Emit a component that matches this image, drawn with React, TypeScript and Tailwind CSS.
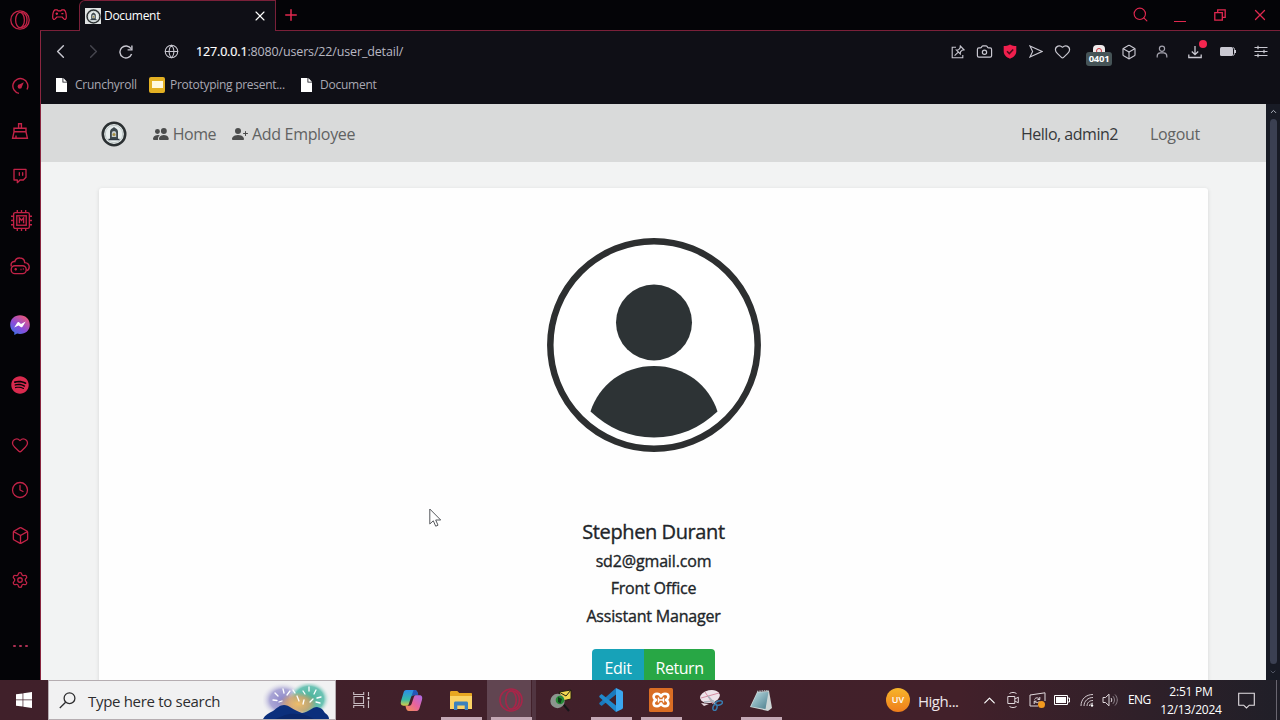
import React from "react"
import {
  Box,
  Camera,
  ChevronLeft,
  ChevronRight,
  ChevronUp,
  Clock,
  Globe,
  Heart,
  Plus,
  Search,
  Settings,
  X,
} from "lucide-react"
import { BsPeopleFill, BsPersonPlusFill } from "react-icons/bs"
import { FaSpotify } from "react-icons/fa"
import { FiTwitch } from "react-icons/fi"

type SvgProps = { className?: string }

function OperaIcon({ className }: SvgProps) {
  return (
    <svg viewBox="0 0 20 20" fill="none" stroke="currentColor" strokeWidth="1.3" className={className}>
      <circle cx="10" cy="10" r="9.2" />
      <ellipse cx="10" cy="10" rx="4.4" ry="7.6" />
      <path d="M11 2.400c4.600.4 6 4 6 7.600s-1.400 7.200-6 7.600" />
    </svg>
  )
}

function GamepadIcon({ className }: SvgProps) {
  return (
    <svg viewBox="0 0 15 12" fill="none" stroke="currentColor" strokeWidth="1.2" className={className}>
      <path d="M3 .8h2.200l1 1h2.600l1-1H12c1.500 1 2.300 4 2.300 7.200 0 2.400-1.400 3-2.500 1.900L10.200 8H4.800L3.200 9.900C2.100 11 .7 10.400.7 8 .7 4.800 1.500 1.800 3 .8Z" />
      <path d="M3.600 4.700h2.400M4.800 3.500v2.400M9.400 4.700h2" />
    </svg>
  )
}

function SpeedIcon({ className }: SvgProps) {
  return (
    <svg viewBox="0 0 18 18" fill="none" stroke="currentColor" strokeWidth="1.4" className={className}>
      <path d="M8 16.400A7.500 7.500 0 1 1 16 12.500" />
      <path d="M12.800 5.200 8.800 7.300a2.200 2.200 0 1 0 2.200 2.200Z" fill="currentColor" stroke="none" />
    </svg>
  )
}

function CleanerIcon({ className }: SvgProps) {
  return (
    <svg viewBox="0 0 18 18" fill="none" stroke="currentColor" strokeWidth="1.400" className={className}>
      <path d="M7.600 6V1.800h2.800V6M3 6.200h12v3.600H3zM3 9.800l-1.400 6.400h14.800L15 9.800M5 16v-2.500" />
    </svg>
  )
}

function ChipIcon({ className }: SvgProps) {
  return (
    <svg viewBox="0 0 20 20" fill="none" stroke="currentColor" strokeWidth="1.300" className={className}>
      <rect x="2.500" y="2.500" width="15" height="15" rx="1.500" />
      <rect x="5.500" y="5.500" width="9" height="9" />
      <path d="M8 12.500v-5l2 2.500 2-2.500v5" />
      <path d="M6 0v2.500M10 0v2.500M14 0v2.500M6 17.500V20M10 17.500V20M14 17.500V20M0 6h2.500M0 10h2.500M0 14h2.500M17.500 6H20M17.500 10H20M17.500 14H20" />
    </svg>
  )
}

function CloudGameIcon({ className }: SvgProps) {
  return (
    <svg viewBox="0 0 20 18" fill="none" stroke="currentColor" strokeWidth="1.400" className={className}>
      <path d="M1.500 9.500C0 6 3 4.200 4.800 4.600 5.600 1.800 8 .8 10 1c3 .2 4.600 2.400 4.700 4.600 3 .1 4.600 2 4.500 4.400 0 2-1.200 3.200-2.500 3.700" />
      <rect x="1.200" y="8.800" width="15" height="7.800" rx="3.600" />
      <path d="M4.500 12.200h2.400M5.700 11v2.400M10.500 12.500h1M12.800 12h1" />
    </svg>
  )
}

function MessengerIcon({ className }: SvgProps) {
  return (
    <svg viewBox="0 0 20 20" className={className}>
      <defs>
        <linearGradient id="msg" x1="0" y1="1" x2="0.700" y2="0">
          <stop offset="0" stopColor="#2a7be8" />
          <stop offset="0.500" stopColor="#8a4ddb" />
          <stop offset="1" stopColor="#e8577c" />
        </linearGradient>
      </defs>
      <path d="M10 .3c5.700 0 9.800 4 9.800 9.400s-4.100 9.300-9.800 9.300c-1 0-2-.1-2.900-.4L4.300 20v-2.700C1.700 15.600.2 13 .2 9.700.2 4.300 4.300.3 10 .3Z" fill="url(#msg)" />
      <path d="m4.200 12.400 3-4.700c.4-.6 1.200-.8 1.800-.4l2 1.600 4.700-2.400-3.200 5.200c-.4.600-1.200.8-1.800.4L8.600 10.400Z" fill="#fff" />
    </svg>
  )
}

function PinShareIcon({ className }: SvgProps) {
  return (
    <svg viewBox="0 0 14 14" fill="none" stroke="currentColor" strokeWidth="1.100" className={className}>
      <path d="M5 2.200H1.200v10.600h10.600V10" />
      <path d="m9.300 1 3.800 3.800-2 .4-1.600 1.600-.2 2.200-4-4 2.200-.2 1.500-1.600ZM7 7.300 3.600 10.700" />
    </svg>
  )
}

function ShieldIcon({ className }: SvgProps) {
  return (
    <svg viewBox="0 0 14 15" className={className}>
      <path d="M7 .5c2 1.100 4 1.600 6.300 1.600v5.200c0 3.700-2.600 6-6.300 7.400C3.300 13.300.7 11 .7 7.300V2.100C3 2.100 5 1.600 7 .5Z" fill="#f01f4d" />
      <path d="m4 7.200 2.300 2.400L10.200 5.400" fill="none" stroke="#4d0a1c" strokeWidth="1.500" />
    </svg>
  )
}

function SendIcon({ className }: SvgProps) {
  return (
    <svg viewBox="0 0 14 13" fill="none" stroke="currentColor" strokeWidth="1.100" className={className}>
      <path d="m1 1 12 5.500L1 12l2.600-5.500Z" />
    </svg>
  )
}

function PersonIcon({ className }: SvgProps) {
  return (
    <svg viewBox="0 0 12 13" fill="none" stroke="currentColor" strokeWidth="1.200" className={className}>
      <circle cx="6" cy="3.700" r="2.600" />
      <path d="M1.200 12.500V11c0-1.800 1-3 3-3.200h3.600c2 .2 3 1.400 3 3.200v1.500" />
    </svg>
  )
}

function DownloadIcon({ className }: SvgProps) {
  return (
    <svg viewBox="0 0 14 14" fill="none" stroke="currentColor" strokeWidth="1.300" className={className}>
      <path d="M7 1v8.500M3.800 6.500 7 9.700l3.200-3.200M.8 9.500v3h12.400v-3" />
    </svg>
  )
}

function BatteryIcon({ className }: SvgProps) {
  return (
    <svg viewBox="0 0 16 9" fill="currentColor" className={className}>
      <rect width="13" height="9" rx="1.500" />
      <path d="M13 .8c1.200 0 1.500.6 1.500 1.700v4c0 1.100-.3 1.700-1.500 1.700" fill="none" stroke="currentColor" />
      <path d="M15.500 3v3" stroke="currentColor" />
    </svg>
  )
}

function SlidersIcon({ className }: SvgProps) {
  return (
    <svg viewBox="0 0 14 13" fill="none" stroke="currentColor" strokeWidth="1.200" className={className}>
      <path d="M.5 2.500h13M.5 6.500h13M.5 10.500h13M4 .8v3.400M10 4.800v3.400M4 8.800v3.400" />
    </svg>
  )
}

function ReloadIcon({ className }: SvgProps) {
  return (
    <svg viewBox="0 0 14 14" fill="none" stroke="currentColor" strokeWidth="1.400" className={className}>
      <path d="M12.600 9A6 6 0 1 1 12 3.700" />
      <path d="M12.900.6v4.300H8.600" />
    </svg>
  )
}

function RestoreIcon({ className }: SvgProps) {
  return (
    <svg viewBox="0 0 12 12" fill="none" stroke="currentColor" strokeWidth="1.300" className={className}>
      <path d="M.8 3.700h7.500v7.500H.8zM3.700 3.500V.8h7.500v7.500H8.500" />
    </svg>
  )
}

function PageIcon({ className }: SvgProps) {
  return (
    <svg viewBox="0 0 11 14" className={className}>
      <path d="M0 0h6.500v4.500H11V14H0Z" fill="#fff" />
      <path d="M7.300 0 11 3.700H7.300Z" fill="#fff" />
    </svg>
  )
}

function SchoolSeal({ className }: SvgProps) {
  return (
    <svg viewBox="0 0 26 26" className={className}>
      <circle cx="13" cy="13" r="11.200" fill="#e8eeee" stroke="#2b3032" strokeWidth="2.600" />
      <circle cx="13" cy="13" r="8.700" fill="none" stroke="#aab4b4" strokeWidth=".7" />
      <path d="M9 19v-8.500C9 8 13 6.200 13 6.200S17 8 17 10.500V19Z" fill="#3e494e" />
      <path d="M10.800 16v-4c0-2.800 4.400-2.800 4.400 0v4Z" fill="#c7ced0" />
      <circle cx="13" cy="13.500" r="1.500" fill="#a58f42" />
      <path d="M7.500 18.500h11" stroke="#303a44" strokeWidth="1.500" />
    </svg>
  )
}

function Avatar() {
  return (
    <svg viewBox="0 0 214 214" className="h-[214px] w-[214px]">
      <circle cx="107" cy="107" r="103.700" fill="#fff" stroke="#2d2f30" strokeWidth="6.500" />
      <circle cx="107" cy="84.500" r="38" fill="#2d3335" />
      <path d="M43.500 173.500C52 147 76 128 107 128s55 19 63.500 45.500C153 190 132 199.500 107 199.500S61 190 43.500 173.500Z" fill="#2d3335" />
    </svg>
  )
}

function WindowsIcon() {
  return (
    <svg viewBox="0 0 16 16" fill="#fff" className="h-4 w-4">
      <path d="M0 2.300 6.600 1.400v6.200H0ZM7.300 1.300 16 0v7.600H7.300ZM0 8.300h6.600v6.300L0 13.700ZM7.300 8.300H16V16l-8.700-1.300Z" />
    </svg>
  )
}

function FireworksArt() {
  return (
    <svg viewBox="0 0 68 36" className="h-9 w-[68px]">
      <defs>
        <radialGradient id="fwl">
          <stop offset="0" stopColor="#8d86c8" />
          <stop offset="0.600" stopColor="#aaa6d5" />
          <stop offset="1" stopColor="#f1f1f2" stopOpacity="0" />
        </radialGradient>
        <radialGradient id="fwr">
          <stop offset="0" stopColor="#45b096" />
          <stop offset="0.700" stopColor="#6cc3b4" />
          <stop offset="1" stopColor="#f1f1f2" stopOpacity="0" />
        </radialGradient>
        <radialGradient id="fwc">
          <stop offset="0" stopColor="#f0bd6a" />
          <stop offset="0.600" stopColor="#d8a56b" stopOpacity=".8" />
          <stop offset="1" stopColor="#d8a56b" stopOpacity="0" />
        </radialGradient>
      </defs>
      <ellipse cx="20" cy="17" rx="22" ry="18" fill="url(#fwl)" />
      <ellipse cx="46" cy="16" rx="21" ry="18" fill="url(#fwr)" />
      <ellipse cx="35" cy="21" rx="19" ry="12" fill="url(#fwc)" />
      <path d="m20 6 1 4M27 8l-3 4M12 10l3 3M10 17l4 .5M30 7l2 3M46 4v4M53 7l-2 4M40 8l2 3M58 14l-4 1M34 13l2 5M41 17l-1 4M50 16l-3 3M16 19l3-1M57 20l-4-1" stroke="#fff" strokeWidth="1.300" strokeLinecap="round" />
      <path d="M0 36c2-4 6-6 10-8 4-3 7-6 11-6 5 0 9 5 18 8 7-1 10-6 15-6 5 1 6 3 8 6 3 2 4 4 4 6Z" fill="#0b2f7c" />
      <path d="M12 36c9-3 12-6 21-5 9 0 12 2 18 5Z" fill="#09276c" />
    </svg>
  )
}

function TaskViewIcon() {
  return (
    <svg viewBox="0 0 17 16" fill="none" stroke="#c9bcc2" strokeWidth="1.100" className="h-4 w-[17px]">
      <path d="M.7 0v2.500h10V0M.7 16v-2.500h10V16M1 4.500h9.500v7H1zM15.500 0v4M15.500 8.500V16" />
      <path d="M14.500 6.200h2" strokeWidth="2" stroke="#fff" />
    </svg>
  )
}

function CopilotIcon() {
  return (
    <svg viewBox="0 0 22 22" className="h-[23px] w-[23px]">
      <defs>
        <linearGradient id="cpa" x1="0" y1="0" x2="0" y2="1">
          <stop offset="0" stopColor="#2c8ce8" />
          <stop offset="0.600" stopColor="#35b9a8" />
          <stop offset="1" stopColor="#d8cf45" />
        </linearGradient>
        <linearGradient id="cpb" x1="1" y1="0" x2="0" y2="1">
          <stop offset="0" stopColor="#a96bea" />
          <stop offset="0.500" stopColor="#e8639c" />
          <stop offset="1" stopColor="#f39550" />
        </linearGradient>
      </defs>
      <path d="M6 1h8c1.600 0 2.300 1 2.800 2.500L17.500 6H13c-1.500 0-2.300 1-2.700 2.500L8.500 14c-.5 1.500-1.300 2-2.600 2H3.500C1 16 .3 14 1 11.500L3.200 4C3.700 2 4.500 1 6 1Z" fill="url(#cpa)" />
      <path d="M13 1h1c1.600 0 2.300 1 2.800 2.500l.7 2.500H13c-1 0-1.700.5-2.200 1.500Z" fill="#2457b8" />
      <path d="M16 21H8.500C7 21 6.200 20 5.800 18.500L5.200 16h3.600c1.500 0 2.200-1 2.600-2.500L13.200 8c.5-1.500 1.300-2 2.600-2h2.700c2.500 0 3.200 2 2.500 4.500L18.800 18c-.5 2-1.300 3-2.800 3Z" fill="url(#cpb)" />
    </svg>
  )
}

function FolderIcon() {
  return (
    <svg viewBox="0 0 22 19" className="h-[19px] w-[22px]">
      <path d="M0 1.500C0 .7.500 0 1.300 0h6l2 2H21c.6 0 1 .4 1 1v15H0Z" fill="#e8a722" />
      <path d="M0 5h22v13H0Z" fill="#fbd365" />
      <path d="M4 19v-7c0-1 .6-1.600 1.500-1.600h11c.9 0 1.500.6 1.500 1.600v7h-3.300v-4.500H7.300V19Z" fill="#3c82bd" />
    </svg>
  )
}

function InspectorIcon() {
  return (
    <svg viewBox="0 0 22 23" className="h-[23px] w-[22px]">
      <path d="m9 3 12-2v9l-9 2Z" fill="#f2d750" stroke="#242010" />
      <path d="m9 3 7 4 5-6" fill="none" stroke="#242010" />
      <path d="m13 15 6 7" stroke="#17161a" strokeWidth="2" />
      <circle cx="7.500" cy="12" r="7.200" fill="#8c968f" />
      <circle cx="10" cy="11" r="4.300" fill="#268b35" />
      <path d="m8 8 4 2-1.500 4.500L8 13Z" fill="#0d3d18" />
    </svg>
  )
}

function CodeIcon() {
  return (
    <svg viewBox="0 0 24 24" className="h-6 w-6">
      <path d="M17 0v6.500L3.200 17.600c-.4.300-.9.300-1.200 0L.5 16.200c-.4-.4-.4-1 0-1.400Z" fill="#1a79bd" />
      <path d="M17 24v-6.500L3.200 6.400c-.4-.3-.9-.3-1.200 0L.5 7.800c-.4.4-.4 1 0 1.400Z" fill="#2089cc" />
      <path d="M17 0v24l5.800-2.700c.7-.3 1.200-1 1.200-1.800v-15c0-.8-.5-1.500-1.200-1.800Z" fill="#3ba7ee" />
    </svg>
  )
}

function XamppIcon() {
  return (
    <svg viewBox="0 0 24 24" className="h-6 w-6">
      <rect width="24" height="24" rx="1.500" fill="#d96d24" />
      <path
        d="M8 5.800C5.600 5.800 4.600 7.300 4.600 8.700c0 1.700 1.200 2.700 2.300 3.300-1.100.6-2.300 1.600-2.300 3.300 0 1.400 1 2.900 3.400 2.900 2.100 0 3.200-1 4-2.700.8 1.700 1.900 2.700 4 2.700 2.400 0 3.400-1.500 3.400-2.900 0-1.700-1.200-2.700-2.300-3.300 1.100-.6 2.300-1.600 2.300-3.300 0-1.400-1-2.900-3.400-2.900-2.100 0-3.200 1-4 2.700-.8-1.700-1.900-2.700-4-2.700Z"
        fill="none"
        stroke="#fff"
        strokeWidth="2.600"
        strokeLinejoin="round"
      />
      <path d="M9.500 9.500v5M14.500 9.500v5M9.500 12h5" stroke="#fff" strokeWidth="1.500" />
    </svg>
  )
}

function SnipIcon() {
  return (
    <svg viewBox="0 0 23 22" className="h-[22px] w-[23px]">
      <ellipse cx="10" cy="7.500" rx="10" ry="6.300" transform="rotate(-12 10 7.500)" fill="#eee3ea" />
      <path d="m1 9 18-5M5 3l8 12" stroke="#d58ba0" />
      <path d="m8 7 7 8M4 13l10-1" stroke="#abb4bd" strokeWidth="1.500" />
      <ellipse cx="19" cy="14" rx="3.500" ry="2" transform="rotate(-15 19 14)" fill="none" stroke="#397caf" strokeWidth="1.500" />
      <ellipse cx="15" cy="18.500" rx="2" ry="3" transform="rotate(15 15 18.500)" fill="none" stroke="#397caf" strokeWidth="1.500" />
      <path d="m1 14 8 1-5 2Z" fill="#e9dce2" />
    </svg>
  )
}

function NotepadIcon() {
  return (
    <svg viewBox="0 0 22 21" className="h-[21px] w-[22px]">
      <defs>
        <linearGradient id="note" x1="0" y1="0" x2="1" y2="1">
          <stop offset="0" stopColor="#c1dfe3" />
          <stop offset="0.550" stopColor="#7faab5" />
          <stop offset="1" stopColor="#4d7e8c" />
        </linearGradient>
      </defs>
      <path d="m7 2 12-1 3 17-4 3L0 17Z" fill="#ced6d6" />
      <path d="m7.500 2.500 11-.5-3 17L1 16.500Z" fill="url(#note)" />
      <path d="m7 1.500 12-1" stroke="#aab4b8" strokeWidth="1.500" strokeDasharray="1.500 .8" />
    </svg>
  )
}

const taskbarApps = [
  { name: "task-view", icon: <TaskViewIcon />, open: false },
  { name: "copilot", icon: <CopilotIcon />, open: false },
  { name: "explorer", icon: <FolderIcon />, open: true },
  { name: "opera", icon: <OperaIcon className="h-6 w-6 text-[#a82549]" />, open: true, active: true },
  { name: "inspector", icon: <InspectorIcon />, open: false },
  { name: "code", icon: <CodeIcon />, open: true },
  { name: "xampp", icon: <XamppIcon />, open: true },
  { name: "snip", icon: <SnipIcon />, open: false },
  { name: "notepad", icon: <NotepadIcon />, open: true },
]

function SidebarItem({ children, tall }: { children: React.ReactNode; tall?: boolean }) {
  return <div className={tall ? "flex h-[60px] items-center justify-center" : "flex h-[45px] items-center justify-center"}>{children}</div>
}

function Sidebar() {
  return (
    <aside className="flex w-10 shrink-0 flex-col bg-[#040407] text-[#c22347]">
      <div className="flex h-10 items-center justify-center">
        <OperaIcon className="h-5 w-5" />
      </div>
      <div className="mt-[23px]">
        <SidebarItem><SpeedIcon className="h-[18px] w-[18px]" /></SidebarItem>
        <SidebarItem><CleanerIcon className="h-[18px] w-[18px]" /></SidebarItem>
        <SidebarItem><FiTwitch className="h-4 w-4" /></SidebarItem>
        <SidebarItem><ChipIcon className="ml-[3px] h-[21px] w-[21px]" /></SidebarItem>
        <SidebarItem><CloudGameIcon className="h-[18px] w-5" /></SidebarItem>
      </div>
      <div className="mt-[7px]">
        <SidebarItem tall><MessengerIcon className="h-5 w-5" /></SidebarItem>
        <SidebarItem tall><FaSpotify className="h-[18px] w-[18px] text-[#d92a4e]" /></SidebarItem>
      </div>
      <div className="mt-[7px]">
        <SidebarItem><Heart size={18} strokeWidth={1.7} /></SidebarItem>
        <SidebarItem><Clock size={18} strokeWidth={1.7} /></SidebarItem>
        <SidebarItem><Box size={19} strokeWidth={1.7} className="mt-px" /></SidebarItem>
        <SidebarItem><Settings size={18} strokeWidth={1.7} /></SidebarItem>
      </div>
      <div className="mt-[43px] flex justify-center gap-[3px]">
        <span className="h-[2px] w-[3px] rounded-full bg-[#b03055]" />
        <span className="h-[2px] w-[3px] rounded-full bg-[#b03055]" />
        <span className="h-[2px] w-[3px] rounded-full bg-[#b03055]" />
      </div>
    </aside>
  )
}

function TabBar() {
  return (
    <div className="flex h-[31px] bg-[#040407] text-[#e0284f]">
      <div className="flex w-[39px] items-center justify-center border-b border-[#7a2039]">
        <GamepadIcon className="h-3 w-[15px]" />
      </div>
      <div className="flex w-[197px] items-center rounded-tl-[6px] border-l border-r border-t border-[#7a2039] bg-[#0f0f16] pl-[5px] pr-[7px] text-white">
        <div className="flex h-4 w-4 items-center justify-center bg-[#dfe2e2]">
          <SchoolSeal className="h-[15px] w-[15px]" />
        </div>
        <span className="ml-[3px] flex-1 text-[12px] tracking-[-0.300px]">Document</span>
        <X size={16} strokeWidth={1.700} />
      </div>
      <div className="flex flex-1 items-center border-b border-[#7a2039]">
        <Plus size={18} strokeWidth={2} className="ml-[6px]" />
        <div className="ml-auto flex">
          <div className="flex w-10 justify-center"><Search size={17} strokeWidth={1.600} /></div>
          <div className="flex w-10 items-end justify-center"><span className="mb-[2px] h-[1.500px] w-3 bg-[#e0284f]" /></div>
          <div className="flex w-10 items-center justify-center"><RestoreIcon className="h-3 w-3" /></div>
          <div className="flex w-10 items-center justify-center"><X size={18} strokeWidth={1.700} /></div>
        </div>
      </div>
    </div>
  )
}

function AddressBar() {
  return (
    <div className="flex h-[41px] items-center pr-[4px] text-[#c9c8d1]">
      <div className="flex w-[38px] justify-center"><ChevronLeft size={23} strokeWidth={1.500} /></div>
      <div className="flex w-[28px] justify-center text-[#45454e]"><ChevronRight size={23} strokeWidth={1.500} /></div>
      <div className="flex w-[38px] justify-center"><ReloadIcon className="h-[14px] w-[14px]" /></div>
      <div className="ml-[12px] flex w-[28px] justify-center"><Globe size={15} strokeWidth={1.700} /></div>
      <div className="ml-[11px] whitespace-nowrap pt-px text-[12.500px] tracking-[-0.150px]">
        <span className="text-white [-webkit-text-stroke:0.2px]">127.0.0.1</span>
        <span className="text-[#b9b8c3]">:8080/users/22/user_detail/</span>
      </div>
      <div className="ml-auto flex items-center">
        <div className="flex w-[26px] justify-center"><PinShareIcon className="h-[14px] w-[14px]" /></div>
        <div className="flex w-[26px] justify-center"><Camera size={17} strokeWidth={1.700} /></div>
        <div className="flex w-[26px] justify-center"><ShieldIcon className="h-[15px] w-[14px]" /></div>
        <div className="flex w-[26px] justify-center"><SendIcon className="h-[13px] w-[14px]" /></div>
        <div className="flex w-[26px] justify-center"><Heart size={17} strokeWidth={1.700} /></div>
        <div className="relative ml-[9px] flex h-[22px] w-[30px] items-start justify-center pt-1">
          <div className="flex h-3 w-3 items-center justify-center rounded-sm bg-[#efe9ea]">
            <span className="h-[6px] w-[6px] rounded-full border border-[#c9343d]" />
          </div>
          <span className="absolute left-[2px] top-[11px] flex h-[14px] w-[26px] items-center justify-center rounded-[3px] bg-[#465457] text-[9.500px] font-bold leading-none tracking-[-0.300px] text-white">
            0401
          </span>
        </div>
        <div className="flex w-[30px] justify-center"><Box size={16} strokeWidth={1.700} /></div>
        <div className="flex w-[36px] justify-center text-[#a3a2ad]"><PersonIcon className="h-[13px] w-[12px]" /></div>
        <div className="relative flex w-[30px] justify-center">
          <DownloadIcon className="h-[14px] w-[14px]" />
          <span className="absolute -top-[5px] left-[19px] h-2 w-2 rounded-full bg-[#f4264f]" />
        </div>
        <div className="flex w-[36px] justify-center"><BatteryIcon className="h-[9px] w-4" /></div>
        <div className="flex w-[30px] justify-center"><SlidersIcon className="h-[13px] w-[14px]" /></div>
      </div>
    </div>
  )
}

function BookmarksBar() {
  return (
    <div className="flex h-8 items-center pb-[8px] pl-[15px] pt-[1px] text-[12px] text-[#a9a8b3]">
      <PageIcon className="h-[14px] w-[11px]" />
      <span className="ml-2 w-[61px] whitespace-nowrap tracking-[-0.250px]">Crunchyroll</span>
      <div className="ml-[13px] flex h-4 w-4 items-center justify-center rounded-[2px] bg-[#e3b023]">
        <span className="h-[7px] w-[11px] bg-[#fff8de]" />
      </div>
      <span className="ml-[5px] w-[116px] whitespace-nowrap tracking-[-0.280px]">Prototyping present...</span>
      <PageIcon className="ml-[15px] h-[14px] w-[11px]" />
      <span className="ml-2 whitespace-nowrap tracking-[-0.250px]">Document</span>
    </div>
  )
}

function Navbar() {
  return (
    <header className="flex h-[58px] shrink-0 items-center bg-[#d9dada] pl-[59px] pr-[66px] pt-px text-[16px] text-[#616262]">
      <div className="flex h-7 w-[27px] items-center justify-center">
        <SchoolSeal className="mt-px h-[26px] w-[26px]" />
      </div>
      <a className="ml-[26px] flex w-[63px] items-center whitespace-nowrap">
        <BsPeopleFill className="mr-1 h-4 w-4 text-[#4b4c4c]" />
        <span className="tracking-[-0.500px]">Home</span>
      </a>
      <a className="ml-[16px] flex items-center whitespace-nowrap">
        <BsPersonPlusFill className="mr-1 h-4 w-4 text-[#4b4c4c]" />
        <span className="tracking-[-0.320px]">Add Employee</span>
      </a>
      <span className="ml-auto tracking-[-0.480px] text-[#36383a]">Hello, admin2</span>
      <a className="ml-8 tracking-[-0.300px]">Logout</a>
    </header>
  )
}

function EmployeeCard() {
  return (
    <main className="mx-[58px] mt-[26px] flex h-[520px] shrink-0 flex-col items-center rounded-t-[3px] bg-[#fefefe] pt-[50px] text-[#212529] shadow-[0_1px_4px_rgba(0,0,0,0.12)] [-webkit-text-stroke:0.35px]">
      <Avatar />
      <h1 className="mt-[66px] text-[20px] font-medium leading-[28px] tracking-[-0.400px]">Stephen Durant</h1>
      <p className="mt-[2px] text-[16px] font-medium leading-[27.300px] tracking-[-0.150px]">sd2@gmail.com</p>
      <p className="text-[16px] font-medium leading-[27.300px] tracking-[-0.200px]">Front Office</p>
      <p className="text-[16px] font-medium leading-[27.300px] tracking-[-0.200px]">Assistant Manager</p>
      <div className="mt-[19px] flex overflow-hidden rounded text-[16px] text-white [-webkit-text-stroke:0px]">
        <button className="h-[38px] w-[52px] bg-[#17a2b8] tracking-[-0.300px]">Edit</button>
        <button className="h-[38px] w-[71px] bg-[#28a745] tracking-[-0.450px]">Return</button>
      </div>
    </main>
  )
}

function Scrollbar() {
  return (
    <div className="flex w-[14px] flex-col items-center bg-[#181b25] text-[#b8bcc6]">
      <ChevronUp size={9} strokeWidth={2.500} className="mt-[3px]" />
      <div className="mt-[3px] w-[7px] flex-1 rounded-sm bg-[#3b4052]" />
      <ChevronUp size={8} strokeWidth={2} className="mb-1 mt-1 rotate-180 text-[#6b7080]" />
    </div>
  )
}

function Taskbar() {
  return (
    <footer className="flex h-10 bg-linear-to-r from-[#40202a] via-[#42202a] via-75% to-[#201f28] text-white">
      <div className="flex w-12 items-center justify-center"><WindowsIcon /></div>
      <div className="flex w-[288px] items-center border border-[#b5adb1] bg-[#f1f1f2] pl-[10px] text-[#2d2d2f]">
        <svg viewBox="0 0 17 17" fill="none" stroke="currentColor" strokeWidth="1.300" className="h-[17px] w-[17px]">
          <circle cx="10.500" cy="6.200" r="5.400" />
          <path d="M6.600 10.200.8 16" />
        </svg>
        <span className="ml-[12px] pt-[2px] text-[15px] tracking-[-0.310px]">Type here to search</span>
        <div className="ml-auto mr-[4px] self-end"><FireworksArt /></div>
      </div>
      <div className="flex">
        {taskbarApps.map((app) => (
          <div key={app.name} className="relative flex w-[50px] items-center justify-center">
            {app.active && (
              <div className="absolute inset-y-0 left-px flex w-[49px]">
                <div className="w-[44px] bg-[#614551]" />
                <div className="ml-px w-[4px] bg-[#513541]" />
              </div>
            )}
            <div className="relative">{app.icon}</div>
            {app.open && <div className="absolute bottom-0 left-[5px] h-[3px] w-[41px] bg-[#c4a8b5]" />}
          </div>
        ))}
      </div>
      <div className="ml-auto flex items-center">
        <div className="flex h-6 w-6 items-center justify-center rounded-full bg-linear-to-b from-[#f6b52b] to-[#ee7d1b] text-[9px] font-semibold">
          UV
        </div>
        <span className="ml-2 w-[42px] whitespace-nowrap pt-[2px] text-[15px] tracking-[-0.500px] text-[#eee6ea]">High...</span>
        <div className="ml-[17px] flex w-6 justify-center"><ChevronUp size={19} strokeWidth={1.500} /></div>
        <div className="flex w-6 justify-center">
          <svg viewBox="0 0 12 16" fill="none" stroke="#e0d8dc" className="h-4 w-3">
            <path d="M2.500 1.500c2-1.400 5-1.400 7 0M2.500 14.500c2 1.400 5 1.400 7 0M.8 4.500h7v7h-7zM7.800 7l3.500-1.800v5.600L7.800 9" />
          </svg>
        </div>
        <div className="relative flex w-6 justify-center">
          <svg viewBox="0 0 17 16" fill="none" stroke="#e0d8dc" className="h-4 w-[17px]">
            <path d="M16 9V.8L1 3v11h8" />
            <path d="M5.500 7.500c1-2.200 4-2.200 5 0M10.800 5v2.500H8.500M10.500 9c-1 2.200-4 2.200-5 0M5.200 12V9.200h2.300" />
          </svg>
          <span className="absolute left-[13px] top-[9px] h-[7px] w-[7px] rounded-full bg-[#f39a1f]" />
        </div>
        <div className="flex w-[26px] justify-center">
          <svg viewBox="0 0 16 10" className="h-[10px] w-4">
            <path d="M.5.5h13v9H.5zM13.500 3h2v4h-2" fill="none" stroke="#fff" />
            <path d="M2 2h10v6H2z" fill="#fff" />
          </svg>
        </div>
        <div className="flex w-[24px] justify-center">
          <svg viewBox="0 0 14 14" fill="none" stroke="#d5ccd1" className="h-[14px] w-[14px]">
            <path d="M1 13C1 6 6 1.500 13 1.500M4 13c0-5 4-8.500 9-8.500M7 13c0-3.500 2.500-5.500 6-5.500M9.500 13c0-1.800 1.500-2.800 3.500-2.800" />
            <circle cx="12" cy="12.500" r="1.200" fill="#fff" stroke="none" />
          </svg>
        </div>
        <div className="flex w-[21px] justify-center">
          <svg viewBox="0 0 16 14" fill="none" stroke="#e0d8dc" className="h-[14px] w-4">
            <path d="M1 4.500h2.500L7 1.200v11.600L3.500 9.500H1ZM9 5c1 1.200 1 2.800 0 4" />
            <path d="M11 3.200c2 2.200 2 5.400 0 7.600M13 1.500c3 3.200 3 7.800 0 11" stroke="#8c8088" />
          </svg>
        </div>
        <span className="ml-[8px] w-[23px] whitespace-nowrap text-[12px] tracking-[-0.600px]">ENG</span>
        <div className="ml-[5px] w-[70px] whitespace-nowrap pt-px text-center text-[12px] leading-[18px] tracking-[-0.230px]">
          <div>2:51 PM</div>
          <div>12/13/2024</div>
        </div>
        <svg viewBox="0 0 17 17" fill="none" stroke="#e4dfe3" strokeWidth="1.100" className="ml-[12px] h-[17px] w-[17px]">
          <path d="M.7 1.200h15.600v12h-5L8.500 16l-2.800-2.800h-5Z" />
        </svg>
        <div className="ml-[21px] mr-[3px] h-10 w-px bg-[#696670]" />
      </div>
    </footer>
  )
}

export default function App() {
  return (
    <div className="relative flex h-[720px] w-[1280px] flex-col overflow-hidden bg-[#040407] font-['Open_Sans','Noto_Sans',sans-serif]">
      <div className="flex h-[680px]">
        <Sidebar />
        <div className="flex min-w-0 flex-1 flex-col">
          <TabBar />
          <div className="flex min-h-0 flex-1 flex-col border-l border-[#8a2640] bg-[#0f0f16]">
            <AddressBar />
            <BookmarksBar />
            <div className="flex min-h-0 flex-1">
              <div className="flex min-w-0 flex-1 flex-col overflow-hidden bg-[#f2f3f3]">
                <Navbar />
                <EmployeeCard />
              </div>
              <Scrollbar />
            </div>
          </div>
        </div>
      </div>
      <Taskbar />
      {/* mouse pointer */}
      <svg viewBox="0 0 13 19" className="absolute left-[429px] top-[508px] h-[19px] w-[13px]">
        <path d="M.8 1v15l3.500-3.200 2.400 5.400 2.300-1-2.300-5.200h5Z" fill="#fff" stroke="#55585c" strokeWidth="1" />
      </svg>
    </div>
  )
}
